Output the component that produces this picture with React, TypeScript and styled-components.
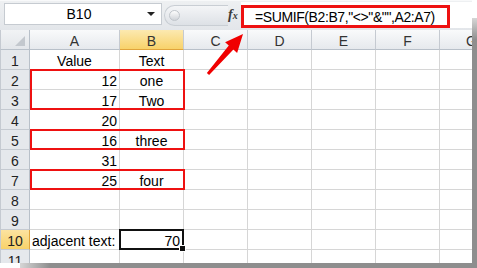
import styled, { createGlobalStyle } from "styled-components";

const GlobalStyle = createGlobalStyle`
	html, body {
		margin: 0;
		padding: 0;
		background: #ffffff;
	}
	body {
		font-family: "Liberation Sans", Arial, sans-serif;
	}
`;

const Page = styled.div`
	display: grid;
	grid-template-columns: 472px 5px;
	grid-template-rows: 263px 5px;
	width: 477px;
	height: 268px;
	overflow: hidden;
`;

const Window = styled.div`
	position: relative;
	display: flex;
	flex-direction: column;
	overflow: hidden;
	background: #ffffff;
`;

const RightShadow = styled.div`
	margin-top: 18px;
	background: linear-gradient(#d6d6d6, #8e8e8e 22px, #8e8e8e);
`;

const BottomShadow = styled.div`
	grid-column: 1 / 3;
	margin-left: 20px;
	background: linear-gradient(90deg, #d6d6d6, #8e8e8e 30px, #8e8e8e);
`;

const Toolbar = styled.div`
	height: 30px;
	flex: none;
	display: flex;
	align-items: flex-start;
	background: linear-gradient(#eef0f2, #e3e6ea);
	border-top: 1px solid #f8f9fa;
	box-sizing: border-box;
`;

const NameBox = styled.div`
	margin: 2px 0 0 4px;
	width: 158px;
	height: 22px;
	box-sizing: border-box;
	display: flex;
	align-items: center;
	background: #ffffff;
	border: 1px solid #c6cbd1;
	font-size: 14px;
	color: #000;
`;

const NameText = styled.div`
	flex: 1;
	text-align: center;
	padding-left: 6px;
	line-height: 20px;
`;

const DropArrow = styled.div`
	width: 0;
	height: 0;
	margin-right: 6px;
	border-left: 4px solid transparent;
	border-right: 4px solid transparent;
	border-top: 4px solid #222;
`;

const Grip = styled.div`
	margin: 4px 0 0 2px;
	width: 64px;
	height: 21px;
	box-sizing: border-box;
	display: flex;
	align-items: center;
	border-radius: 11px 0 0 11px;
	border: 1px solid #c9ced4;
	border-right: none;
	background: linear-gradient(#f4f5f7, #dde1e6);
`;

const GripDot = styled.div`
	margin-left: 4px;
	width: 9px;
	height: 9px;
	border-radius: 50%;
	background: linear-gradient(#fdfdfd, #d0d4d9);
	border: 1px solid #c0c5cb;
`;

const FxLabel = styled.div`
	width: 13px;
	margin-top: 6px;
	font-family: "Liberation Serif", "Times New Roman", serif;
	font-style: italic;
	font-weight: bold;
	font-size: 14px;
	color: #3a3a3a;
	line-height: 16px;
	sub {
		font-size: 10px;
		vertical-align: baseline;
	}
`;

const FormulaField = styled.div`
	flex: 1;
	height: 26px;
	margin-top: 1px;
	background: #ffffff;
	display: flex;
	align-items: flex-start;
`;

const FormulaMark = styled.div`
	margin-top: 3px;
	width: 209px;
	height: 23px;
	box-sizing: border-box;
	border: 3px solid #ee1111;
	padding-left: 11px;
	font-size: 14px;
	letter-spacing: -0.4px;
	line-height: 18px;
	color: #000;
	white-space: nowrap;
`;

const Sheet = styled.div`
	display: grid;
	grid-template-columns: 30px 90px 64px 64px 64px 64px 64px 64px;
	grid-template-rows: repeat(12, 20px);
	width: 472px;
	height: 233px;
	overflow: hidden;
	font-size: 14px;
	color: #000;
`;

interface PlaceProps {
	$row: number;
	$col: number;
}

const ColHead = styled.div<PlaceProps & { $active?: boolean }>`
	grid-row: ${(p) => p.$row};
	grid-column: ${(p) => p.$col};
	box-sizing: border-box;
	border-right: 1px solid #c5cad1;
	border-bottom: 1px solid ${(p) => (p.$active ? "#e0a43c" : "#b8c0c9")};
	background: ${(p) =>
		p.$active ? "linear-gradient(#fce9b0, #f8d26a)" : "linear-gradient(#f9fafb, #e6e9ed)"};
	text-align: center;
	line-height: 22px;
	overflow: hidden;
	color: #333;
`;

const Corner = styled.div`
	grid-row: 1;
	grid-column: 1;
	box-sizing: border-box;
	border-right: 1px solid #b8c0c9;
	border-bottom: 1px solid #b8c0c9;
	border-left: 1px solid #c5cad1;
	background: linear-gradient(#f1f3f5, #e3e6ea);
	display: flex;
	align-items: flex-end;
	justify-content: flex-end;
	padding: 0 4px 3px 0;
`;

const CornerMark = styled.div`
	width: 10px;
	height: 10px;
	background: #c3c8ce;
	clip-path: polygon(100% 0, 100% 100%, 0 100%);
`;

const RowHead = styled.div<PlaceProps & { $active?: boolean }>`
	grid-row: ${(p) => p.$row};
	grid-column: ${(p) => p.$col};
	box-sizing: border-box;
	border-left: 1px solid #c5cad1;
	border-right: 1px solid ${(p) => (p.$active ? "#e0a43c" : "#b8c0c9")};
	border-bottom: 1px solid #c5cad1;
	background: ${(p) => (p.$active ? "linear-gradient(#fce3a0, #f8d26a)" : "#e5e8ec")};
	text-align: center;
	line-height: 22px;
	overflow: hidden;
	color: #222;
`;

type Align = "left" | "center" | "right";

const Cell = styled.div<PlaceProps & { $align?: Align }>`
	grid-row: ${(p) => p.$row};
	grid-column: ${(p) => p.$col};
	box-sizing: border-box;
	border-right: 1px solid #d6d6d6;
	border-bottom: 1px solid #d6d6d6;
	text-align: ${(p) => p.$align || "left"};
	padding: 0 2px;
	line-height: 22px;
	white-space: nowrap;
	overflow: visible;
`;

const Selected = styled(Cell)`
	position: relative;
	margin: -1px 0 0 -1px;
	border: 2px solid #111;
	padding-right: 2px;
	line-height: 20px;
`;

const FillHandle = styled.div`
	position: absolute;
	right: -4px;
	bottom: -4px;
	width: 5px;
	height: 5px;
	background: #111;
	border: 1px solid #fff;
`;

const RedBox = styled.div<{ $rows: string; $cols: string }>`
	grid-row: ${(p) => p.$rows};
	grid-column: ${(p) => p.$cols};
	margin: -1px -1px 0 0;
	border: 2px solid #ee1111;
	pointer-events: none;
	z-index: 2;
`;

const Arrow = styled.svg`
	position: absolute;
	left: 200px;
	top: 28px;
	z-index: 3;
`;

const columns = ["A", "B", "C", "D", "E", "F", "G"];

const data: { a?: string; b?: string; aAlign?: Align }[] = [
	{ a: "Value", b: "Text", aAlign: "center" },
	{ a: "12", b: "one" },
	{ a: "17", b: "Two" },
	{ a: "20" },
	{ a: "16", b: "three" },
	{ a: "31" },
	{ a: "25", b: "four" },
	{},
	{},
	{ a: "adjacent text:", aAlign: "left" },
	{},
];

export default function App() {
	return (
		<>
			<GlobalStyle />
			<Page>
				<Window>
					<Toolbar>
						<NameBox>
							<NameText>B10</NameText>
							<DropArrow />
						</NameBox>
						<Grip>
							<GripDot />
						</Grip>
						<FxLabel>
							f<sub>x</sub>
						</FxLabel>
						<FormulaField>
							<FormulaMark>=SUMIF(B2:B7,"&lt;&gt;"&amp;"",A2:A7)</FormulaMark>
						</FormulaField>
					</Toolbar>
					<Sheet>
						<Corner>
							<CornerMark />
						</Corner>
						{columns.map((c, i) => (
							<ColHead key={c} $row={1} $col={i + 2} $active={c === "B"}>
								{c}
							</ColHead>
						))}
						{data.map((r, i) => {
							const row = i + 2;
							const n = i + 1;
							return [
								<RowHead key={`h${n}`} $row={row} $col={1} $active={n === 10}>
									{n}
								</RowHead>,
								<Cell key={`a${n}`} $row={row} $col={2} $align={r.aAlign || "right"}>
									{r.a}
								</Cell>,
								n === 10 ? (
									<Selected key={`b${n}`} $row={row} $col={3} $align="right">
										70
										<FillHandle />
									</Selected>
								) : (
									<Cell key={`b${n}`} $row={row} $col={3} $align="center">
										{r.b}
									</Cell>
								),
								...[4, 5, 6, 7, 8, 9].map((c) => <Cell key={`c${n}-${c}`} $row={row} $col={c} />),
							];
						})}
						<RedBox $rows="3 / 5" $cols="2 / 4" />
						<RedBox $rows="6" $cols="2 / 4" />
						<RedBox $rows="8" $cols="2 / 4" />
					</Sheet>
					<Arrow width="50" height="52" viewBox="200 28 50 52">
						<polygon
							points="243,34 237.1,52.9 233.4,49.6 209.1,75 206.9,73 228.8,45.6 225.1,42.3"
							fill="#f00000"
						/>
					</Arrow>
				</Window>
				<RightShadow />
				<BottomShadow />
			</Page>
		</>
	);
}
